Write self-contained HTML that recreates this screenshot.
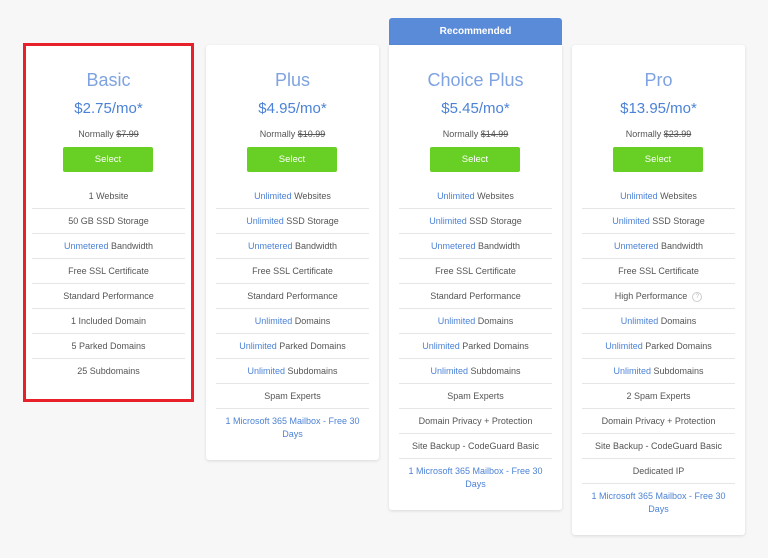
<!DOCTYPE html><html><head><style>
body{margin:0;width:768px;height:558px;background:#f7f7f7;font-family:"Liberation Sans",sans-serif;position:relative;overflow:hidden}
.c{position:absolute;top:45px;width:173px;background:#fff;border-radius:3px;box-shadow:0 1px 3px rgba(0,0,0,.12);text-align:center}
.t{position:absolute;top:25px;left:0;right:0;font-size:18px;line-height:20px;color:#7ea3e0}
.p{position:absolute;top:55px;left:0;right:0;font-size:15px;line-height:18px;color:#4c82d6}
.n{position:absolute;top:83px;left:0;right:0;font-size:9px;line-height:12px;color:#555}
.n s{color:#555}
.b{position:absolute;top:102px;left:41px;width:90px;height:25px;background:#68cf24;border-radius:2px;color:#fff;font-size:9.5px;line-height:25px}
.r{position:absolute;top:139px;left:10px;right:10px}
.r div{height:24px;line-height:24px;border-bottom:1px solid #e6e6e6;font-size:9px;color:#555}
.r div:last-child{border-bottom:none}
.r div.m{height:auto;line-height:13px;padding:6px 0 0;color:#4c82d6;white-space:nowrap}
u{text-decoration:none;color:#4c82d6}
</style></head><body>
<div style="position:absolute;left:23px;top:43px;width:165px;height:353px;border:3px solid #e8202a;"></div>
<div class="c" style="left:26px;top:46px;width:165px;height:353px;box-shadow:none;border-radius:0">
<div class="t" style="top:24px">Basic</div><div class="p" style="top:54px">$2.75/mo*</div><div class="n" style="top:82px">Normally <s>$7.99</s></div><div class="b" style="left:37px;top:101px">Select</div>
<div class="r" style="top:138px;left:6px;right:6px"><div>1 Website</div><div>50 GB SSD Storage</div><div><u>Unmetered</u> Bandwidth</div><div>Free SSL Certificate</div><div>Standard Performance</div><div>1 Included Domain</div><div>5 Parked Domains</div><div>25 Subdomains</div></div></div>

<div class="c" style="left:206px;height:415px">
<div class="t">Plus</div><div class="p">$4.95/mo*</div><div class="n">Normally <s>$10.99</s></div><div class="b">Select</div>
<div class="r"><div><u>Unlimited</u> Websites</div><div><u>Unlimited</u> SSD Storage</div><div><u>Unmetered</u> Bandwidth</div><div>Free SSL Certificate</div><div>Standard Performance</div><div><u>Unlimited</u> Domains</div><div><u>Unlimited</u> Parked Domains</div><div><u>Unlimited</u> Subdomains</div><div>Spam Experts</div><div class="m">1 Microsoft 365 Mailbox - Free 30<br>Days</div></div></div>

<div style="position:absolute;left:389px;top:18px;width:173px;height:27px;background:#5a8bd8;border-radius:3px 3px 0 0;color:#fff;font-size:10px;font-weight:bold;line-height:27px;text-align:center">Recommended</div>
<div class="c" style="left:389px;height:465px;border-radius:0 0 3px 3px">
<div class="t">Choice Plus</div><div class="p">$5.45/mo*</div><div class="n">Normally <s>$14.99</s></div><div class="b">Select</div>
<div class="r"><div><u>Unlimited</u> Websites</div><div><u>Unlimited</u> SSD Storage</div><div><u>Unmetered</u> Bandwidth</div><div>Free SSL Certificate</div><div>Standard Performance</div><div><u>Unlimited</u> Domains</div><div><u>Unlimited</u> Parked Domains</div><div><u>Unlimited</u> Subdomains</div><div>Spam Experts</div><div>Domain Privacy + Protection</div><div>Site Backup - CodeGuard Basic</div><div class="m">1 Microsoft 365 Mailbox - Free 30<br>Days</div></div></div>

<div class="c" style="left:572px;height:490px">
<div class="t">Pro</div><div class="p">$13.95/mo*</div><div class="n">Normally <s>$23.99</s></div><div class="b">Select</div>
<div class="r"><div><u>Unlimited</u> Websites</div><div><u>Unlimited</u> SSD Storage</div><div><u>Unmetered</u> Bandwidth</div><div>Free SSL Certificate</div><div>High Performance &nbsp;<span style="display:inline-block;width:8px;height:8px;border:1px solid #ccc;border-radius:50%;font-size:6px;line-height:8px;color:#bbb;vertical-align:middle">?</span></div><div><u>Unlimited</u> Domains</div><div><u>Unlimited</u> Parked Domains</div><div><u>Unlimited</u> Subdomains</div><div>2 Spam Experts</div><div>Domain Privacy + Protection</div><div>Site Backup - CodeGuard Basic</div><div>Dedicated IP</div><div class="m">1 Microsoft 365 Mailbox - Free 30<br>Days</div></div></div>
</body></html>
